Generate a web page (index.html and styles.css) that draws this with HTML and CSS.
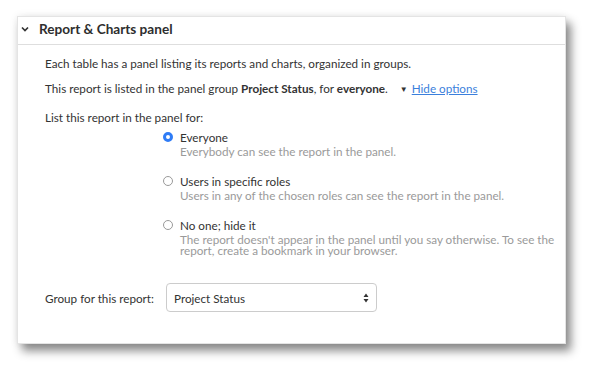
FILE: index.html
```html
<!DOCTYPE html>
<html lang="en">
<head>
    <meta charset="UTF-8">
    <meta name="viewport" content="width=device-width, initial-scale=1.0">
    <title>Report &amp; Charts panel</title>
    <link rel="stylesheet" href="styles.css">
</head>
<body>
    <div class="panel">
        <div class="panel-header">
            <svg class="chevron" width="8" height="6" viewBox="0 0 8 6">
                <path d="M1 1.5 L4 4.5 L7 1.5" fill="none" stroke="#333" stroke-width="1.7"/>
            </svg>
            <span>Report &amp; Charts panel</span>
        </div>

        <div class="panel-body">
            <p class="intro">Each table has a panel listing its reports and charts, organized in groups.</p>
            <p class="status">This report is listed in the panel group <b>Project Status</b>, for <b>everyone</b>.
                <span class="toggle"><span class="tri">&#9660;</span><a href="#">Hide options</a></span>
            </p>
            <p class="list-label">List this report in the panel for:</p>

            <div class="options">
                <label class="option">
                    <span class="radio checked"></span>
                    <span class="option-text">
                        <span class="option-title">Everyone</span>
                        <span class="option-desc">Everybody can see the report in the panel.</span>
                    </span>
                </label>
                <label class="option">
                    <span class="radio"></span>
                    <span class="option-text">
                        <span class="option-title">Users in specific roles</span>
                        <span class="option-desc">Users in any of the chosen roles can see the report in the panel.</span>
                    </span>
                </label>
                <label class="option">
                    <span class="radio"></span>
                    <span class="option-text">
                        <span class="option-title">No one; hide it</span>
                        <span class="option-desc">The report doesn't appear in the panel until you say otherwise. To see the report, create a bookmark in your browser.</span>
                    </span>
                </label>
            </div>

            <div class="group-row">
                <span class="group-label">Group for this report:</span>
                <div class="select">
                    <span>Project Status</span>
                    <svg width="6" height="10" viewBox="0 0 6 10">
                        <path d="M0.5 4 L3 0.5 L5.5 4 Z M0.5 6 L3 9.5 L5.5 6 Z" fill="#333"/>
                    </svg>
                </div>
            </div>
        </div>
    </div>
</body>
</html>
```

FILE: styles.css
```css
html, body {
    min-height: 100%;
}

body {
    margin: 0;
    padding-bottom: 30px;
    background: #ffffff;
    font-family: 'Lato', 'Open Sans', sans-serif;
    font-size: 11.7px;
    color: #333333;
}

.panel {
    margin: 16px 0 0 17px;
    width: 547px;
    height: 326px;
    background: #ffffff;
    border: 1px solid #e4e4e4;
    box-shadow: 5px 7px 9px rgba(0, 0, 0, 0.45), 0 0 8px rgba(0, 0, 0, 0.08);
}

.panel-header {
    height: 24px;
    padding: 0 0 3px 3px;
    display: flex;
    align-items: center;
    gap: 10px;
    border-bottom: 1px solid #dedede;
    font-size: 13.6px;
    font-weight: bold;
    color: #2e2e2e;
}

.panel-body {
    padding: 10px 0 0 27px;
}

p {
    margin: 0;
    line-height: 16px;
}

.status {
    margin-top: 9px;
}

.toggle {
    margin-left: 9px;
}

.tri {
    font-size: 8px;
    margin-right: 4px;
    position: relative;
    top: -1px;
}

.toggle a {
    color: #3b7fdc;
    text-decoration: underline;
}

.list-label {
    margin-top: 11px;
}

.options {
    margin: 4px 0 0 118px;
    display: flex;
    flex-direction: column;
    gap: 16px;
}

.option {
    display: flex;
    gap: 7px;
}

.radio {
    width: 10px;
    height: 10px;
    margin-top: 3px;
    border: 1px solid #9a9a9a;
    border-radius: 50%;
    box-sizing: border-box;
    flex-shrink: 0;
    background: #ffffff;
}

.radio.checked {
    border: 3px solid #2f7cf6;
    background: #ffffff;
}

.option-text {
    display: flex;
    flex-direction: column;
    width: 380px;
}

.option-title {
    line-height: 16px;
}

.option-desc {
    margin-top: 1px;
    line-height: 11px;
    color: #9a9a9a;
}

.group-row {
    margin-top: 27px;
    display: flex;
    align-items: center;
    gap: 12px;
}

.select {
    width: 195px;
    height: 27px;
    border: 1px solid #cccccc;
    border-radius: 4px;
    display: flex;
    align-items: center;
    justify-content: space-between;
    padding: 0 7px;
}
```
